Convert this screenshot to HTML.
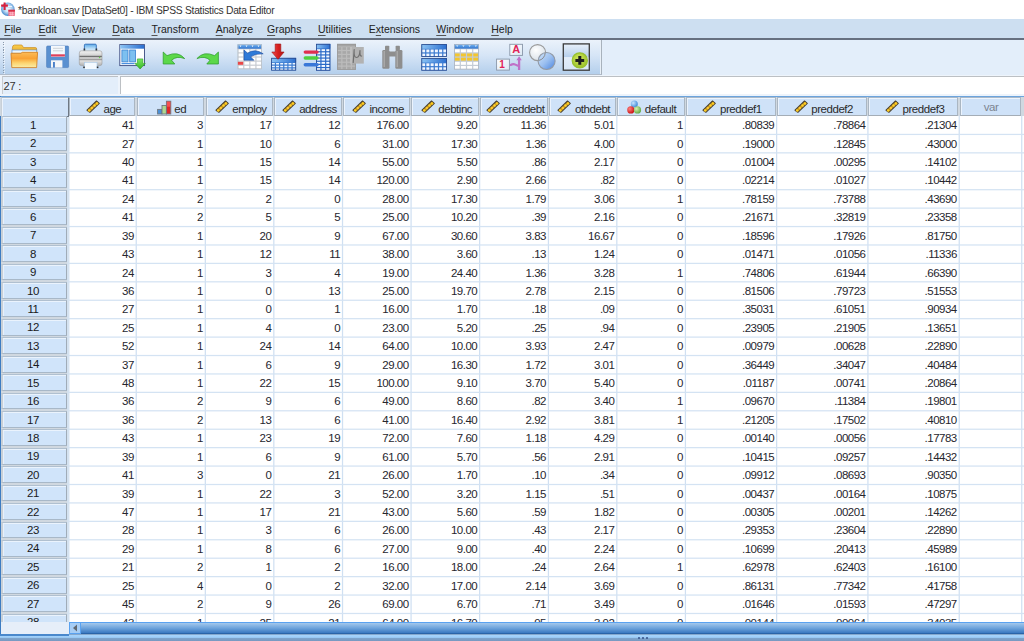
<!DOCTYPE html>
<html><head><meta charset="utf-8"><title>SPSS Data Editor</title>
<style>
*{margin:0;padding:0;box-sizing:border-box}
html,body{width:1024px;height:641px;overflow:hidden;background:#fff;font-family:"Liberation Sans",sans-serif;color:#222}
.a{position:absolute}
#title{left:0;top:0;width:1024px;height:19px;background:#fff}
#ttext{left:18px;top:3.6px;font-size:10.3px;letter-spacing:-0.275px;color:#333;white-space:nowrap;line-height:13px}
#menu{left:0;top:19px;width:1024px;height:19.2px;background:#cddff1}
.mi{top:22.5px;font-size:10.5px;line-height:13px;white-space:nowrap;color:#222}
.mi u{text-decoration:underline;text-decoration-thickness:1px;text-underline-offset:1.5px;text-decoration-color:#555}
#dark{left:0;top:38.1px;width:1024px;height:1.7px;background:#667080}
#tbarea{left:0;top:39.8px;width:1024px;height:35.9px;background:#e3eefa}
#tb{left:0;top:39.8px;width:602px;height:34.8px;background:linear-gradient(#ebf2fb,#d6e5f6 45%,#b4cfec);border-right:1.4px solid #a8b2bc;border-bottom:1px solid #b0bccb;box-shadow:inset -1px 0 0 #e8f0f8}
#tbline{display:none}
#cellrow{left:0;top:74.6px;width:1024px;height:21.2px;background:#eef4fb}
#cbox{left:2px;top:76px;width:116.1px;height:17.5px;background:#e3eefa;border-top:1.5px solid #bcc0c4;border-left:1px solid #c8ccd0}
#ctext{left:3.5px;top:80.2px;font-size:11px;letter-spacing:-0.2px;line-height:13px;color:#333}
#vbox{left:120.2px;top:76px;width:904px;height:17.5px;background:#fff;border-left:1.3px solid #bcc0c4;border-top:1.5px solid #bcc0c4}
#gtop{left:0;top:95.7px;width:1024px;height:1.8px;background:linear-gradient(#5a98d8,#7eb0e2)}
#gleft{left:0;top:96px;width:1.2px;height:539.5px;background:#3d7cc2}
#grid{left:1.3px;top:97.5px;width:1022.7px;height:524.1px;background:#fff;overflow:hidden}
.hd{top:97.4px;height:18.35px;background:#cfe2f8;border-top:1.1px solid #a9b9ca;border-left:0.9px solid #aab6c2;border-right:0.9px solid #aab6c2;border-bottom:1px solid #a4adb6;box-shadow:inset 0 1px 0 #eef5fd,inset 0.9px 0 0 #eef5fd}
#hstrip{left:0;top:97.4px;width:1024px;height:18.35px;background:#d0d8e0}
.ht{position:absolute;top:3.2px;height:15px;font-size:11.5px;letter-spacing:-0.45px;line-height:15px;white-space:nowrap;color:#2a2a2a;display:flex;justify-content:center;align-items:flex-start}
.ic{position:absolute}
.rh{left:1.1px;width:65.9px;height:16.8px;background:#d0e4fa;border-top:1.4px solid #b0c0d0;border-bottom:1px solid #a8b8c8;border-left:2px solid #c8d0d8;border-right:1px solid #a0acb8;box-shadow:inset 0 1px 0 #eaf3fd,inset 1px 0 0 #e8f0fa}
.rt{position:absolute;left:-1.6px;width:63px;text-align:center;top:1.5px;letter-spacing:-0.5px;font-size:11.5px;line-height:13px;color:#1a1a1a}
.vl{width:1.3px;background:#d2e1f1}
.hl{height:1.3px;background:#d6e4f3}
.c{font-size:11.5px;letter-spacing:-0.5px;line-height:13px;text-align:right;white-space:nowrap;color:#26262e}
#below{left:1.3px;top:621.6px;width:1022.7px;height:13.4px;background:#e6eef9}
#sb{left:68.5px;top:621.8px;width:955.5px;height:11.8px;background:linear-gradient(#a4c8ec,#6ea4dc 50%,#3a78c0);border-top:1px solid #5aa2f0;border-bottom:1px solid #2a64a8}
#sbl{left:68.5px;top:621.8px;width:12px;height:11.8px;background:#a6cdf5;border:1px solid #5aa2f0}
#bot1{left:0;top:633.6px;width:1024px;height:1.8px;background:#86a8cc}
#bot2{left:0;top:635.2px;width:1024px;height:5.8px;background:linear-gradient(#a8d4fb,#9ccdf8 40%,#7ea4cc 55%,#7898c0)}
</style></head><body>

<div id="title" class="a"></div>
<svg class="a" style="left:0;top:0" width="18" height="18" viewBox="0 0 18 18"><defs><radialGradient id="tic" cx="0.5" cy="0.45" r="0.55"><stop offset="0" stop-color="#dcecfa"/><stop offset="0.6" stop-color="#a8ccee"/><stop offset="1" stop-color="#3f86cc"/></radialGradient></defs><circle cx="7.85" cy="9.25" r="6.75" fill="url(#tic)"/><path d="M7 6.5H12M6 8.8H10.5M5.5 11H8" stroke="#f4faff" stroke-width="0.9"/><rect x="8.4" y="9.8" width="6.5" height="6.1" fill="#f07088"/><rect x="8.4" y="9.8" width="6.5" height="1.8" fill="#d83048"/><path d="M9.2 12.8H14.2M9.2 14.4H14.2M10.8 11.8V15.6M12.5 11.8V15.6" stroke="#ffc8d4" stroke-width="0.6"/><rect x="3.6" y="2.5" width="2" height="7.5" fill="#d8203c"/><rect x="1.1" y="4.5" width="6.8" height="2.2" fill="#d8203c"/></svg>
<div id="ttext" class="a">*bankloan.sav [DataSet0] - IBM SPSS Statistics Data Editor</div>
<div id="menu" class="a"></div>
<div class="a mi" style="left:4.3px"><u>F</u>ile</div>
<div class="a mi" style="left:38.6px"><u>E</u>dit</div>
<div class="a mi" style="left:72.3px"><u>V</u>iew</div>
<div class="a mi" style="left:112.2px"><u>D</u>ata</div>
<div class="a mi" style="left:151.5px"><u>T</u>ransform</div>
<div class="a mi" style="left:215.7px"><u>A</u>nalyze</div>
<div class="a mi" style="left:267px"><u>G</u>raphs</div>
<div class="a mi" style="left:318px"><u>U</u>tilities</div>
<div class="a mi" style="left:368.75px">E<u>x</u>tensions</div>
<div class="a mi" style="left:436.25px"><u>W</u>indow</div>
<div class="a mi" style="left:491.25px"><u>H</u>elp</div>
<div id="dark" class="a"></div>
<div id="tbarea" class="a"></div><div id="tb" class="a"></div>
<div class="a" style="left:3.4px;top:41.8px;width:1.1px;height:1.1px;background:#8a9aac;box-shadow:0.8px 0.8px 0 #ffffff"></div>
<div class="a" style="left:3.4px;top:44.35px;width:1.1px;height:1.1px;background:#8a9aac;box-shadow:0.8px 0.8px 0 #ffffff"></div>
<div class="a" style="left:3.4px;top:46.9px;width:1.1px;height:1.1px;background:#8a9aac;box-shadow:0.8px 0.8px 0 #ffffff"></div>
<div class="a" style="left:3.4px;top:49.45px;width:1.1px;height:1.1px;background:#8a9aac;box-shadow:0.8px 0.8px 0 #ffffff"></div>
<div class="a" style="left:3.4px;top:52px;width:1.1px;height:1.1px;background:#8a9aac;box-shadow:0.8px 0.8px 0 #ffffff"></div>
<div class="a" style="left:3.4px;top:54.55px;width:1.1px;height:1.1px;background:#8a9aac;box-shadow:0.8px 0.8px 0 #ffffff"></div>
<div class="a" style="left:3.4px;top:57.1px;width:1.1px;height:1.1px;background:#8a9aac;box-shadow:0.8px 0.8px 0 #ffffff"></div>
<div class="a" style="left:3.4px;top:59.65px;width:1.1px;height:1.1px;background:#8a9aac;box-shadow:0.8px 0.8px 0 #ffffff"></div>
<div class="a" style="left:3.4px;top:62.2px;width:1.1px;height:1.1px;background:#8a9aac;box-shadow:0.8px 0.8px 0 #ffffff"></div>
<div class="a" style="left:3.4px;top:64.75px;width:1.1px;height:1.1px;background:#8a9aac;box-shadow:0.8px 0.8px 0 #ffffff"></div>
<div class="a" style="left:3.4px;top:67.3px;width:1.1px;height:1.1px;background:#8a9aac;box-shadow:0.8px 0.8px 0 #ffffff"></div>
<div class="a" style="left:3.4px;top:69.85px;width:1.1px;height:1.1px;background:#8a9aac;box-shadow:0.8px 0.8px 0 #ffffff"></div>
<div class="a" style="left:3.4px;top:72.4px;width:1.1px;height:1.1px;background:#8a9aac;box-shadow:0.8px 0.8px 0 #ffffff"></div>
<svg class="a" style="left:0;top:0" width="610" height="80" viewBox="0 0 610 80">
<defs>
<linearGradient id="fold" x1="0" y1="0" x2="0" y2="1"><stop offset="0" stop-color="#fbbc58"/><stop offset="0.4" stop-color="#f9a234"/><stop offset="0.7" stop-color="#fcd470"/><stop offset="1" stop-color="#fbeea8"/></linearGradient>
<linearGradient id="foldb" x1="0" y1="0" x2="0" y2="1"><stop offset="0" stop-color="#f8d050"/><stop offset="1" stop-color="#e8a020"/></linearGradient>
<linearGradient id="hblue" x1="0" y1="0" x2="1" y2="0"><stop offset="0" stop-color="#8cc4f4"/><stop offset="1" stop-color="#2a6ed0"/></linearGradient>
<linearGradient id="hblue2" x1="0" y1="0" x2="0" y2="1"><stop offset="0" stop-color="#7ab8f0"/><stop offset="1" stop-color="#2f74d0"/></linearGradient>
<linearGradient id="pgray" x1="0" y1="0" x2="0" y2="1"><stop offset="0" stop-color="#f4f4f4"/><stop offset="0.3" stop-color="#d4d4d4"/><stop offset="0.38" stop-color="#6a6a6a"/><stop offset="0.48" stop-color="#e8e8e8"/><stop offset="0.58" stop-color="#9a9a9a"/><stop offset="0.68" stop-color="#e0e0e0"/><stop offset="1" stop-color="#b0b0b0"/></linearGradient>
<linearGradient id="paper" x1="0" y1="0" x2="0" y2="1"><stop offset="0" stop-color="#5aaae8"/><stop offset="0.5" stop-color="#b8dcf6"/><stop offset="1" stop-color="#f4faff"/></linearGradient>
<linearGradient id="green" x1="0" y1="0" x2="0" y2="1"><stop offset="0" stop-color="#7ae860"/><stop offset="1" stop-color="#38b828"/></linearGradient>
<linearGradient id="redar" x1="0" y1="0" x2="1" y2="0"><stop offset="0" stop-color="#f05050"/><stop offset="0.5" stop-color="#d82020"/><stop offset="1" stop-color="#b01818"/></linearGradient>
<linearGradient id="showbg" x1="0" y1="0" x2="0" y2="1"><stop offset="0" stop-color="#e8f0fa"/><stop offset="0.48" stop-color="#b8d0ec"/><stop offset="0.52" stop-color="#e4eefa"/><stop offset="1" stop-color="#d8e6f6"/></linearGradient>
<radialGradient id="circw" cx="0.4" cy="0.35" r="0.7"><stop offset="0" stop-color="#ffffff"/><stop offset="1" stop-color="#d8e0e8"/></radialGradient>
<linearGradient id="circb" x1="0" y1="0" x2="1" y2="1"><stop offset="0" stop-color="#d0e4fa"/><stop offset="0.5" stop-color="#9cc0f0"/><stop offset="1" stop-color="#4a84e0"/></linearGradient>
<radialGradient id="gball" cx="0.45" cy="0.4" r="0.6"><stop offset="0" stop-color="#d8ec60"/><stop offset="1" stop-color="#98c028"/></radialGradient>
</defs>

<path d="M12.4 48.2 Q12.4 45 14.5 45 L21.8 45 L23.6 47.6 L35.5 47.6 Q36.6 47.6 36.6 49 L36.6 53 L12.4 53 Z" fill="url(#foldb)" stroke="#c88a20" stroke-width="0.7"/>
<rect x="12" y="50" width="24.8" height="3.4" fill="#eaf6fc" stroke="#4a8ad8" stroke-width="0.6"/>
<path d="M11 53.2 L21 53.2 L22.2 52.3 L37.6 52.3 L36.6 67.6 L11.8 67.6 Z" fill="url(#fold)" stroke="#d07a18" stroke-width="0.8" stroke-linejoin="round"/>
<path d="M47.6 46 L67.6 46 Q68.6 46 68.6 47 L68.6 66.6 Q68.6 67.6 67.6 67.6 L47.6 67.6 Q46.6 67.6 46.6 66.6 L46.6 47 Q46.6 46 47.6 46 Z" fill="#5a90d0" stroke="#4a78b8" stroke-width="0.6"/>
<rect x="51" y="46" width="13.9" height="10.8" fill="#f4f8fc"/><rect x="51" y="54.3" width="13.9" height="2.2" fill="#e0405a"/>
<path d="M53 48.3H63M53 50.8H63" stroke="#b0b8c0" stroke-width="0.6"/>
<rect x="51" y="60.3" width="11.4" height="7.3" fill="#f4f6f8"/><rect x="53" y="62" width="1.9" height="5.6" fill="#4a80c8"/>
<rect x="84.4" y="44.2" width="11.9" height="8.5" rx="1" fill="url(#paper)" stroke="#2a6ab8" stroke-width="0.9"/><rect x="83.6" y="48.5" width="1.6" height="3.5" fill="#303840"/><rect x="95.6" y="48.5" width="1.6" height="3.5" fill="#303840"/>
<rect x="79.3" y="50.8" width="22.7" height="14.8" rx="2.2" fill="url(#pgray)" stroke="#9a9a9a" stroke-width="0.6"/>
<circle cx="99.6" cy="57.5" r="0.8" fill="#60d048"/>
<rect x="84.4" y="62.3" width="12.6" height="7" fill="#f4faff" stroke="#a8c8e8" stroke-width="0.6"/>
<rect x="83.2" y="66.5" width="1.6" height="1.6" fill="#303030"/><rect x="96.8" y="66.5" width="1.6" height="1.6" fill="#303030"/>
<rect x="119.8" y="44.6" width="24.7" height="21" fill="#fff" stroke="#3a4a80" stroke-width="0.9"/>
<rect x="120.2" y="45" width="24" height="3.7" fill="url(#hblue)"/>
<rect x="121.9" y="50" width="6.1" height="11.9" fill="#7cc0f0" stroke="#3a80d0" stroke-width="0.8"/>
<rect x="129.7" y="50" width="5.9" height="11.9" fill="#7cc0f0" stroke="#3a80d0" stroke-width="0.8"/>
<rect x="121.5" y="63" width="13" height="1.2" fill="#4a90e0"/>
<path d="M137.4 58.9 L142.8 58.9 L142.8 63.4 L145.3 63.4 L140.1 69 L134.9 63.4 L137.4 63.4 Z" fill="url(#green)" stroke="#289a20" stroke-width="0.6"/>
<path d="M163.2 52 L163.2 64 L174.8 64 L171.6 60.2 Q176.5 55.6 184.7 58.6 Q178 50.6 167 55.6 Z" fill="#5cd84a" stroke="#2a9a28" stroke-width="0.7" stroke-linejoin="round"/>
<path d="M163.2 52 L163.2 64 L174.8 64 L171.6 60.2 Q176.5 55.6 184.7 58.6 Q178 50.6 167 55.6 Z" fill="#5cd84a" stroke="#2a9a28" stroke-width="0.7" stroke-linejoin="round" transform="translate(381.6 0) scale(-1 1)"/>
<rect x="237.60" y="44.30" width="24.30" height="24.90" fill="#c8ccd2"/><rect x="237.60" y="44.30" width="24.30" height="4.40" fill="url(#hblue2)"/><rect x="238.30" y="49.40" width="4.87" height="2.90" fill="#fff"/><rect x="244.37" y="49.40" width="4.87" height="2.90" fill="#fff"/><rect x="250.45" y="49.40" width="4.87" height="2.90" fill="#fff"/><rect x="256.52" y="49.40" width="4.87" height="2.90" fill="#fff"/><rect x="238.30" y="53.50" width="4.87" height="2.90" fill="#fff"/><rect x="244.37" y="53.50" width="4.87" height="2.90" fill="#fff"/><rect x="250.45" y="53.50" width="4.87" height="2.90" fill="#fff"/><rect x="256.52" y="53.50" width="4.87" height="2.90" fill="#fff"/><rect x="238.30" y="57.60" width="4.87" height="2.90" fill="#fff"/><rect x="244.37" y="57.60" width="4.87" height="2.90" fill="#fff"/><rect x="250.45" y="57.60" width="4.87" height="2.90" fill="#fff"/><rect x="256.52" y="57.60" width="4.87" height="2.90" fill="#fff"/><rect x="238.30" y="61.70" width="4.87" height="2.90" fill="#fff"/><rect x="244.37" y="61.70" width="4.87" height="2.90" fill="#fff"/><rect x="250.45" y="61.70" width="4.87" height="2.90" fill="#fff"/><rect x="256.52" y="61.70" width="4.87" height="2.90" fill="#fff"/><rect x="238.30" y="65.80" width="4.87" height="2.90" fill="#fff"/><rect x="244.37" y="65.80" width="4.87" height="2.90" fill="#fff"/><rect x="250.45" y="65.80" width="4.87" height="2.90" fill="#fff"/><rect x="256.52" y="65.80" width="4.87" height="2.90" fill="#fff"/><rect x="238.00" y="44.70" width="23.50" height="24.10" fill="none" stroke="#b8c0c8" stroke-width="0.8"/>
<path d="M239.5 45.6 L241.5 45.6 L240.5 47 Z M245.5 45.6 L247.5 45.6 L246.5 47 Z M251.5 45.6 L253.5 45.6 L252.5 47 Z M257.5 45.6 L259.5 45.6 L258.5 47 Z" fill="#fff"/>
<rect x="237.9" y="61.8" width="5.3" height="3" fill="#e84848"/>
<path d="M244 50 L244 60.2 L253.9 60.2 L250.5 56.8 Q255.5 53.5 263.2 53.8 Q255 48 247.6 53.2 Z" fill="#2f7ad8" stroke="#1a4aa0" stroke-width="0.6" stroke-linejoin="round"/>
<rect x="271.20" y="57.90" width="24.90" height="12.60" fill="#3a7ad0"/><rect x="271.20" y="57.90" width="24.90" height="4.40" fill="url(#hblue)"/><rect x="271.90" y="63.00" width="2.95" height="1.53" fill="#eef6ff"/><rect x="276.05" y="63.00" width="2.95" height="1.53" fill="#eef6ff"/><rect x="280.20" y="63.00" width="2.95" height="1.53" fill="#eef6ff"/><rect x="284.35" y="63.00" width="2.95" height="1.53" fill="#eef6ff"/><rect x="288.50" y="63.00" width="2.95" height="1.53" fill="#eef6ff"/><rect x="292.65" y="63.00" width="2.95" height="1.53" fill="#eef6ff"/><rect x="271.90" y="65.73" width="2.95" height="1.53" fill="#eef6ff"/><rect x="276.05" y="65.73" width="2.95" height="1.53" fill="#eef6ff"/><rect x="280.20" y="65.73" width="2.95" height="1.53" fill="#eef6ff"/><rect x="284.35" y="65.73" width="2.95" height="1.53" fill="#eef6ff"/><rect x="288.50" y="65.73" width="2.95" height="1.53" fill="#eef6ff"/><rect x="292.65" y="65.73" width="2.95" height="1.53" fill="#eef6ff"/><rect x="271.90" y="68.47" width="2.95" height="1.53" fill="#eef6ff"/><rect x="276.05" y="68.47" width="2.95" height="1.53" fill="#eef6ff"/><rect x="280.20" y="68.47" width="2.95" height="1.53" fill="#eef6ff"/><rect x="284.35" y="68.47" width="2.95" height="1.53" fill="#eef6ff"/><rect x="288.50" y="68.47" width="2.95" height="1.53" fill="#eef6ff"/><rect x="292.65" y="68.47" width="2.95" height="1.53" fill="#eef6ff"/><rect x="271.60" y="58.30" width="24.10" height="11.80" fill="none" stroke="#2c4a8a" stroke-width="0.8"/>
<path d="M275.2 44 L280.8 44 L280.8 52 L284.1 52 L278 59.3 L271.8 52 L275.2 52 Z" fill="url(#redar)" stroke="#a01010" stroke-width="0.6" stroke-linejoin="round"/>
<rect x="316.10" y="43.90" width="14.20" height="26.70" fill="#2a6ac8"/><rect x="316.10" y="43.90" width="14.20" height="4.60" fill="url(#hblue)"/><rect x="316.80" y="49.20" width="3.53" height="1.96" fill="#f4f9ff"/><rect x="321.53" y="49.20" width="3.53" height="1.96" fill="#f4f9ff"/><rect x="326.27" y="49.20" width="3.53" height="1.96" fill="#f4f9ff"/><rect x="316.80" y="52.36" width="3.53" height="1.96" fill="#f4f9ff"/><rect x="321.53" y="52.36" width="3.53" height="1.96" fill="#f4f9ff"/><rect x="326.27" y="52.36" width="3.53" height="1.96" fill="#f4f9ff"/><rect x="316.80" y="55.51" width="3.53" height="1.96" fill="#f4f9ff"/><rect x="321.53" y="55.51" width="3.53" height="1.96" fill="#f4f9ff"/><rect x="326.27" y="55.51" width="3.53" height="1.96" fill="#f4f9ff"/><rect x="316.80" y="58.67" width="3.53" height="1.96" fill="#f4f9ff"/><rect x="321.53" y="58.67" width="3.53" height="1.96" fill="#f4f9ff"/><rect x="326.27" y="58.67" width="3.53" height="1.96" fill="#f4f9ff"/><rect x="316.80" y="61.83" width="3.53" height="1.96" fill="#f4f9ff"/><rect x="321.53" y="61.83" width="3.53" height="1.96" fill="#f4f9ff"/><rect x="326.27" y="61.83" width="3.53" height="1.96" fill="#f4f9ff"/><rect x="316.80" y="64.99" width="3.53" height="1.96" fill="#f4f9ff"/><rect x="321.53" y="64.99" width="3.53" height="1.96" fill="#f4f9ff"/><rect x="326.27" y="64.99" width="3.53" height="1.96" fill="#f4f9ff"/><rect x="316.80" y="68.14" width="3.53" height="1.96" fill="#f4f9ff"/><rect x="321.53" y="68.14" width="3.53" height="1.96" fill="#f4f9ff"/><rect x="326.27" y="68.14" width="3.53" height="1.96" fill="#f4f9ff"/><rect x="316.50" y="44.30" width="13.40" height="25.90" fill="none" stroke="#2a4a90" stroke-width="0.8"/>
<rect x="303.6" y="50.4" width="15.1" height="3.3" rx="1.6" fill="#e03050"/>
<rect x="303.6" y="56.2" width="15.1" height="3.5" rx="1.7" fill="#50d040"/>
<rect x="303.6" y="62.9" width="15.1" height="3.5" rx="1.7" fill="#3a78d8"/>
<rect x="337.00" y="43.90" width="19.00" height="26.00" fill="#bcbcbc"/><rect x="337.00" y="43.90" width="19.00" height="2.60" fill="#a4a4a4"/><rect x="337.70" y="47.20" width="3.55" height="2.70" fill="#a8a8a8"/><rect x="342.45" y="47.20" width="3.55" height="2.70" fill="#a8a8a8"/><rect x="347.20" y="47.20" width="3.55" height="2.70" fill="#a8a8a8"/><rect x="351.95" y="47.20" width="3.55" height="2.70" fill="#a8a8a8"/><rect x="337.70" y="51.10" width="3.55" height="2.70" fill="#a8a8a8"/><rect x="342.45" y="51.10" width="3.55" height="2.70" fill="#a8a8a8"/><rect x="347.20" y="51.10" width="3.55" height="2.70" fill="#a8a8a8"/><rect x="351.95" y="51.10" width="3.55" height="2.70" fill="#a8a8a8"/><rect x="337.70" y="55.00" width="3.55" height="2.70" fill="#a8a8a8"/><rect x="342.45" y="55.00" width="3.55" height="2.70" fill="#a8a8a8"/><rect x="347.20" y="55.00" width="3.55" height="2.70" fill="#a8a8a8"/><rect x="351.95" y="55.00" width="3.55" height="2.70" fill="#a8a8a8"/><rect x="337.70" y="58.90" width="3.55" height="2.70" fill="#a8a8a8"/><rect x="342.45" y="58.90" width="3.55" height="2.70" fill="#a8a8a8"/><rect x="347.20" y="58.90" width="3.55" height="2.70" fill="#a8a8a8"/><rect x="351.95" y="58.90" width="3.55" height="2.70" fill="#a8a8a8"/><rect x="337.70" y="62.80" width="3.55" height="2.70" fill="#a8a8a8"/><rect x="342.45" y="62.80" width="3.55" height="2.70" fill="#a8a8a8"/><rect x="347.20" y="62.80" width="3.55" height="2.70" fill="#a8a8a8"/><rect x="351.95" y="62.80" width="3.55" height="2.70" fill="#a8a8a8"/><rect x="337.70" y="66.70" width="3.55" height="2.70" fill="#a8a8a8"/><rect x="342.45" y="66.70" width="3.55" height="2.70" fill="#a8a8a8"/><rect x="347.20" y="66.70" width="3.55" height="2.70" fill="#a8a8a8"/><rect x="351.95" y="66.70" width="3.55" height="2.70" fill="#a8a8a8"/><rect x="337.40" y="44.30" width="18.20" height="25.20" fill="none" stroke="#989898" stroke-width="0.8"/>
<rect x="350.4" y="47" width="13.4" height="16.6" fill="#b2b2b2"/><rect x="350.4" y="47" width="1.2" height="16.6" fill="#c8c8c8"/>
<path d="M354.2 49.5 L353.2 62.5 M354.1 51 Q353.8 57.5 356.6 57.5 Q359.6 57.5 360 50.5 M360 50.5 Q359.6 56.5 361.6 56" fill="none" stroke="#707070" stroke-width="1.2" stroke-linecap="round"/>
<g fill="#8e8e8e"><rect x="385" y="45.8" width="4.3" height="4.5" rx="0.8"/><rect x="395.6" y="45.8" width="4.3" height="4.5" rx="0.8"/>
<rect x="382.3" y="50" width="7.2" height="18.7" rx="1.2"/><rect x="395.3" y="50" width="7.1" height="18.7" rx="1.2"/><rect x="389" y="51.5" width="6.8" height="5"/></g>
<rect x="383.5" y="51" width="1.5" height="16" fill="#a8a8a8"/><rect x="396.5" y="51" width="1.5" height="16" fill="#a8a8a8"/>
<rect x="421.40" y="44.20" width="25.50" height="12.70" fill="#3a7ad0"/><rect x="421.40" y="44.20" width="25.50" height="4.60" fill="url(#hblue)"/><rect x="422.10" y="49.50" width="3.05" height="2.85" fill="#f0f6ff"/><rect x="426.35" y="49.50" width="3.05" height="2.85" fill="#f0f6ff"/><rect x="430.60" y="49.50" width="3.05" height="2.85" fill="#f0f6ff"/><rect x="434.85" y="49.50" width="3.05" height="2.85" fill="#f0f6ff"/><rect x="439.10" y="49.50" width="3.05" height="2.85" fill="#f0f6ff"/><rect x="443.35" y="49.50" width="3.05" height="2.85" fill="#f0f6ff"/><rect x="422.10" y="53.55" width="3.05" height="2.85" fill="#f0f6ff"/><rect x="426.35" y="53.55" width="3.05" height="2.85" fill="#f0f6ff"/><rect x="430.60" y="53.55" width="3.05" height="2.85" fill="#f0f6ff"/><rect x="434.85" y="53.55" width="3.05" height="2.85" fill="#f0f6ff"/><rect x="439.10" y="53.55" width="3.05" height="2.85" fill="#f0f6ff"/><rect x="443.35" y="53.55" width="3.05" height="2.85" fill="#f0f6ff"/><rect x="421.80" y="44.60" width="24.70" height="11.90" fill="none" stroke="#2c4a8a" stroke-width="0.8"/>
<rect x="421.40" y="58.00" width="25.50" height="12.60" fill="#3a7ad0"/><rect x="421.40" y="58.00" width="25.50" height="4.60" fill="url(#hblue)"/><rect x="422.10" y="63.30" width="3.05" height="2.80" fill="#f0f6ff"/><rect x="426.35" y="63.30" width="3.05" height="2.80" fill="#f0f6ff"/><rect x="430.60" y="63.30" width="3.05" height="2.80" fill="#f0f6ff"/><rect x="434.85" y="63.30" width="3.05" height="2.80" fill="#f0f6ff"/><rect x="439.10" y="63.30" width="3.05" height="2.80" fill="#f0f6ff"/><rect x="443.35" y="63.30" width="3.05" height="2.80" fill="#f0f6ff"/><rect x="422.10" y="67.30" width="3.05" height="2.80" fill="#f0f6ff"/><rect x="426.35" y="67.30" width="3.05" height="2.80" fill="#f0f6ff"/><rect x="430.60" y="67.30" width="3.05" height="2.80" fill="#f0f6ff"/><rect x="434.85" y="67.30" width="3.05" height="2.80" fill="#f0f6ff"/><rect x="439.10" y="67.30" width="3.05" height="2.80" fill="#f0f6ff"/><rect x="443.35" y="67.30" width="3.05" height="2.80" fill="#f0f6ff"/><rect x="421.80" y="58.40" width="24.70" height="11.80" fill="none" stroke="#2c4a8a" stroke-width="0.8"/>
<rect x="454.00" y="44.20" width="24.80" height="25.30" fill="#c4ccd6"/><rect x="454.00" y="44.20" width="24.80" height="4.40" fill="url(#hblue2)"/><rect x="454.70" y="49.30" width="5.00" height="2.98" fill="#fff"/><rect x="460.90" y="49.30" width="5.00" height="2.98" fill="#fff"/><rect x="467.10" y="49.30" width="5.00" height="2.98" fill="#fff"/><rect x="473.30" y="49.30" width="5.00" height="2.98" fill="#fff"/><rect x="454.70" y="53.48" width="5.00" height="2.98" fill="#f3c62e"/><rect x="460.90" y="53.48" width="5.00" height="2.98" fill="#f3c62e"/><rect x="467.10" y="53.48" width="5.00" height="2.98" fill="#f3c62e"/><rect x="473.30" y="53.48" width="5.00" height="2.98" fill="#f3c62e"/><rect x="454.70" y="57.66" width="5.00" height="2.98" fill="#f3c62e"/><rect x="460.90" y="57.66" width="5.00" height="2.98" fill="#f3c62e"/><rect x="467.10" y="57.66" width="5.00" height="2.98" fill="#f3c62e"/><rect x="473.30" y="57.66" width="5.00" height="2.98" fill="#f3c62e"/><rect x="454.70" y="61.84" width="5.00" height="2.98" fill="#fff"/><rect x="460.90" y="61.84" width="5.00" height="2.98" fill="#fff"/><rect x="467.10" y="61.84" width="5.00" height="2.98" fill="#fff"/><rect x="473.30" y="61.84" width="5.00" height="2.98" fill="#fff"/><rect x="454.70" y="66.02" width="5.00" height="2.98" fill="#fff"/><rect x="460.90" y="66.02" width="5.00" height="2.98" fill="#fff"/><rect x="467.10" y="66.02" width="5.00" height="2.98" fill="#fff"/><rect x="473.30" y="66.02" width="5.00" height="2.98" fill="#fff"/><rect x="454.40" y="44.60" width="24.00" height="24.50" fill="none" stroke="#aab4c4" stroke-width="0.8"/>
<path d="M456 45.4 L458.4 45.4 L457.2 46.8 Z M462.2 45.4 L464.6 45.4 L463.4 46.8 Z M468.4 45.4 L470.8 45.4 L469.6 46.8 Z M474.6 45.4 L477 45.4 L475.8 46.8 Z" fill="#fff"/>
<defs><linearGradient id="vlb" x1="0" y1="0" x2="1" y2="1"><stop offset="0" stop-color="#ffffff"/><stop offset="1" stop-color="#dce8f4"/></linearGradient></defs>
<rect x="509.8" y="44.3" width="12.7" height="11.1" fill="url(#vlb)" stroke="#8896a8" stroke-width="0.9"/>
<text x="512.2" y="53.1" font-family="Liberation Sans" font-weight="bold" font-size="10.4" fill="#e02458" transform="translate(512.2 0) scale(1.05 1) translate(-512.2 0)">A</text>
<rect x="496.6" y="59.1" width="12.8" height="11" fill="url(#vlb)" stroke="#8896a8" stroke-width="0.9"/>
<text x="499.2" y="67.8" font-family="Liberation Sans" font-weight="bold" font-size="10" fill="#e02458">1</text>
<path d="M519.1 70 L519.1 58.8" stroke="#c070c8" stroke-width="2.3" fill="none"/>
<path d="M516.4 60.2 L519.1 56.3 L521.8 60.2 Z" fill="#c070c8"/>
<path d="M510.7 65 Q513.2 63.5 515.4 64.6 Q517.4 65.6 519 66" stroke="#c070c8" stroke-width="2.1" fill="none" stroke-linecap="round"/>
<circle cx="537.6" cy="52.6" r="8" fill="url(#circw)" stroke="#9a9a9a" stroke-width="1.1"/>
<circle cx="546.6" cy="61" r="8.5" fill="url(#circb)" stroke="#929aa6" stroke-width="1.1"/>
<path d="M538.6 60.5 A8 8 0 0 0 545.2 52.7" fill="none" stroke="#8a8a8a" stroke-width="1"/>
<rect x="563.3" y="43.9" width="26" height="26.3" fill="url(#showbg)" stroke="#3a3a3a" stroke-width="1.3"/>
<circle cx="579.8" cy="60.4" r="7.6" fill="url(#gball)" stroke="#98c030" stroke-width="1.2"/>
<path d="M579.8 56V64.8M575.4 60.4H584.2" stroke="#1e1e1e" stroke-width="3"/>
</svg>
<div id="tbline" class="a"></div><div id="cellrow" class="a"></div>
<div id="cbox" class="a"></div><div id="ctext" class="a">27 :</div><div id="vbox" class="a"></div>
<div id="gtop" class="a"></div><div id="gleft" class="a"></div>
<div id="grid" class="a"></div>
<svg class="a" style="left:0;top:0" width="1024" height="622" viewBox="0 0 1024 622"><rect x="68.2" y="116" width="1.25" height="506" fill="#d0e0f2"/><rect x="135.6" y="116" width="1.25" height="506" fill="#d0e0f2"/><rect x="204.7" y="116" width="1.25" height="506" fill="#d0e0f2"/><rect x="273.2" y="116" width="1.25" height="506" fill="#d0e0f2"/><rect x="341.9" y="116" width="1.25" height="506" fill="#d0e0f2"/><rect x="410.45" y="116" width="1.25" height="506" fill="#d0e0f2"/><rect x="479" y="116" width="1.25" height="506" fill="#d0e0f2"/><rect x="547.8" y="116" width="1.25" height="506" fill="#d0e0f2"/><rect x="616.2" y="116" width="1.25" height="506" fill="#d0e0f2"/><rect x="684.8" y="116" width="1.25" height="506" fill="#d0e0f2"/><rect x="776" y="116" width="1.25" height="506" fill="#d0e0f2"/><rect x="867.3" y="116" width="1.25" height="506" fill="#d0e0f2"/><rect x="958.6" y="116" width="1.25" height="506" fill="#d0e0f2"/><rect x="1021.1" y="116" width="1.25" height="506" fill="#d0e0f2"/><rect x="68.8" y="133.8" width="955.2" height="1.25" fill="#d4e3f3"/><rect x="68.8" y="152.23" width="955.2" height="1.25" fill="#d4e3f3"/><rect x="68.8" y="170.65" width="955.2" height="1.25" fill="#d4e3f3"/><rect x="68.8" y="189.08" width="955.2" height="1.25" fill="#d4e3f3"/><rect x="68.8" y="207.5" width="955.2" height="1.25" fill="#d4e3f3"/><rect x="68.8" y="225.93" width="955.2" height="1.25" fill="#d4e3f3"/><rect x="68.8" y="244.35" width="955.2" height="1.25" fill="#d4e3f3"/><rect x="68.8" y="262.77" width="955.2" height="1.25" fill="#d4e3f3"/><rect x="68.8" y="281.2" width="955.2" height="1.25" fill="#d4e3f3"/><rect x="68.8" y="299.62" width="955.2" height="1.25" fill="#d4e3f3"/><rect x="68.8" y="318.05" width="955.2" height="1.25" fill="#d4e3f3"/><rect x="68.8" y="336.48" width="955.2" height="1.25" fill="#d4e3f3"/><rect x="68.8" y="354.9" width="955.2" height="1.25" fill="#d4e3f3"/><rect x="68.8" y="373.32" width="955.2" height="1.25" fill="#d4e3f3"/><rect x="68.8" y="391.75" width="955.2" height="1.25" fill="#d4e3f3"/><rect x="68.8" y="410.17" width="955.2" height="1.25" fill="#d4e3f3"/><rect x="68.8" y="428.6" width="955.2" height="1.25" fill="#d4e3f3"/><rect x="68.8" y="447.02" width="955.2" height="1.25" fill="#d4e3f3"/><rect x="68.8" y="465.45" width="955.2" height="1.25" fill="#d4e3f3"/><rect x="68.8" y="483.88" width="955.2" height="1.25" fill="#d4e3f3"/><rect x="68.8" y="502.3" width="955.2" height="1.25" fill="#d4e3f3"/><rect x="68.8" y="520.73" width="955.2" height="1.25" fill="#d4e3f3"/><rect x="68.8" y="539.15" width="955.2" height="1.25" fill="#d4e3f3"/><rect x="68.8" y="557.58" width="955.2" height="1.25" fill="#d4e3f3"/><rect x="68.8" y="576" width="955.2" height="1.25" fill="#d4e3f3"/><rect x="68.8" y="594.42" width="955.2" height="1.25" fill="#d4e3f3"/><rect x="68.8" y="612.85" width="955.2" height="1.25" fill="#d4e3f3"/></svg>
<div class="a" style="left:1.1px;top:117px;width:66px;height:504.6px;background:#d0d8e0"></div><div class="a" style="left:67px;top:117px;width:2px;height:504.6px;background:#d4e2f0"></div>
<div id="hstrip" class="a"></div><div class="a hd" style="left:1.1px;width:68px;height:19.35px;border-left:1.2px solid #c8d0d8;border-right:1.8px solid #6e7884;border-bottom:1.3px solid #6e7884"></div>
<div class="a hd" style="left:69.2px;width:66.2px">
<div class="ht" style="left:0;width:65.9px"><span style="display:block;width:18.5px;height:15px;position:relative"><svg class="ic" style="left:0;top:-1.2px" width="16" height="15" viewBox="0 0 16 15"><path d="M2.0 10.2 L4.9 12.3 L14.3 3.3 L11.5 1.0 Z" fill="#c89818" stroke="#4c4434" stroke-width="1.1" stroke-linejoin="round"/><circle cx="4.2" cy="10.5" r="1.25" fill="#ffd02a"/><circle cx="6.8" cy="8.1" r="1.25" fill="#ffc830"/><circle cx="9.5" cy="5.6" r="1.25" fill="#ffd02a"/><circle cx="12" cy="3.4" r="1.25" fill="#ffcc20"/></svg></span><span>age</span></div>
</div>
<div class="a hd" style="left:136.6px;width:67.9px">
<div class="ht" style="left:0;width:67.6px"><span style="display:block;width:17.5px;height:15px;position:relative"><svg class="ic" style="left:0;top:-1.2px" width="15" height="15" viewBox="0 0 15 15"><rect x="0.6" y="9.4" width="4.4" height="4.6" fill="#4a90d8" stroke="#707880" stroke-width="0.9"/><rect x="5" y="5.5" width="4.4" height="8.5" fill="#b0d890" stroke="#707880" stroke-width="0.9"/><rect x="9.4" y="1.2" width="4.4" height="12.8" fill="#e02828" stroke="#707880" stroke-width="0.9"/><rect x="9.9" y="1.7" width="3.4" height="5" fill="#f85050"/></svg></span><span>ed</span></div>
</div>
<div class="a hd" style="left:205.7px;width:67.3px">
<div class="ht" style="left:0;width:67px"><span style="display:block;width:18.5px;height:15px;position:relative"><svg class="ic" style="left:0;top:-1.2px" width="16" height="15" viewBox="0 0 16 15"><path d="M2.0 10.2 L4.9 12.3 L14.3 3.3 L11.5 1.0 Z" fill="#c89818" stroke="#4c4434" stroke-width="1.1" stroke-linejoin="round"/><circle cx="4.2" cy="10.5" r="1.25" fill="#ffd02a"/><circle cx="6.8" cy="8.1" r="1.25" fill="#ffc830"/><circle cx="9.5" cy="5.6" r="1.25" fill="#ffd02a"/><circle cx="12" cy="3.4" r="1.25" fill="#ffcc20"/></svg></span><span>employ</span></div>
</div>
<div class="a hd" style="left:274.2px;width:67.5px">
<div class="ht" style="left:0;width:67.2px"><span style="display:block;width:18.5px;height:15px;position:relative"><svg class="ic" style="left:0;top:-1.2px" width="16" height="15" viewBox="0 0 16 15"><path d="M2.0 10.2 L4.9 12.3 L14.3 3.3 L11.5 1.0 Z" fill="#c89818" stroke="#4c4434" stroke-width="1.1" stroke-linejoin="round"/><circle cx="4.2" cy="10.5" r="1.25" fill="#ffd02a"/><circle cx="6.8" cy="8.1" r="1.25" fill="#ffc830"/><circle cx="9.5" cy="5.6" r="1.25" fill="#ffd02a"/><circle cx="12" cy="3.4" r="1.25" fill="#ffcc20"/></svg></span><span>address</span></div>
</div>
<div class="a hd" style="left:342.9px;width:67.35px">
<div class="ht" style="left:0;width:67.05px"><span style="display:block;width:18.5px;height:15px;position:relative"><svg class="ic" style="left:0;top:-1.2px" width="16" height="15" viewBox="0 0 16 15"><path d="M2.0 10.2 L4.9 12.3 L14.3 3.3 L11.5 1.0 Z" fill="#c89818" stroke="#4c4434" stroke-width="1.1" stroke-linejoin="round"/><circle cx="4.2" cy="10.5" r="1.25" fill="#ffd02a"/><circle cx="6.8" cy="8.1" r="1.25" fill="#ffc830"/><circle cx="9.5" cy="5.6" r="1.25" fill="#ffd02a"/><circle cx="12" cy="3.4" r="1.25" fill="#ffcc20"/></svg></span><span>income</span></div>
</div>
<div class="a hd" style="left:411.45px;width:67.35px">
<div class="ht" style="left:0;width:67.05px"><span style="display:block;width:18.5px;height:15px;position:relative"><svg class="ic" style="left:0;top:-1.2px" width="16" height="15" viewBox="0 0 16 15"><path d="M2.0 10.2 L4.9 12.3 L14.3 3.3 L11.5 1.0 Z" fill="#c89818" stroke="#4c4434" stroke-width="1.1" stroke-linejoin="round"/><circle cx="4.2" cy="10.5" r="1.25" fill="#ffd02a"/><circle cx="6.8" cy="8.1" r="1.25" fill="#ffc830"/><circle cx="9.5" cy="5.6" r="1.25" fill="#ffd02a"/><circle cx="12" cy="3.4" r="1.25" fill="#ffcc20"/></svg></span><span>debtinc</span></div>
</div>
<div class="a hd" style="left:480px;width:67.6px">
<div class="ht" style="left:0;width:67.3px"><span style="display:block;width:18.5px;height:15px;position:relative"><svg class="ic" style="left:0;top:-1.2px" width="16" height="15" viewBox="0 0 16 15"><path d="M2.0 10.2 L4.9 12.3 L14.3 3.3 L11.5 1.0 Z" fill="#c89818" stroke="#4c4434" stroke-width="1.1" stroke-linejoin="round"/><circle cx="4.2" cy="10.5" r="1.25" fill="#ffd02a"/><circle cx="6.8" cy="8.1" r="1.25" fill="#ffc830"/><circle cx="9.5" cy="5.6" r="1.25" fill="#ffd02a"/><circle cx="12" cy="3.4" r="1.25" fill="#ffcc20"/></svg></span><span>creddebt</span></div>
</div>
<div class="a hd" style="left:548.8px;width:67.2px">
<div class="ht" style="left:0;width:66.9px"><span style="display:block;width:18.5px;height:15px;position:relative"><svg class="ic" style="left:0;top:-1.2px" width="16" height="15" viewBox="0 0 16 15"><path d="M2.0 10.2 L4.9 12.3 L14.3 3.3 L11.5 1.0 Z" fill="#c89818" stroke="#4c4434" stroke-width="1.1" stroke-linejoin="round"/><circle cx="4.2" cy="10.5" r="1.25" fill="#ffd02a"/><circle cx="6.8" cy="8.1" r="1.25" fill="#ffc830"/><circle cx="9.5" cy="5.6" r="1.25" fill="#ffd02a"/><circle cx="12" cy="3.4" r="1.25" fill="#ffcc20"/></svg></span><span>othdebt</span></div>
</div>
<div class="a hd" style="left:617.2px;width:67.4px">
<div class="ht" style="left:0;width:67.1px"><span style="display:block;width:17.5px;height:15px;position:relative"><svg class="ic" style="left:0;top:-1.2px" width="15" height="14" viewBox="0 0 15 14"><defs><radialGradient id="gb" cx="0.35" cy="0.35" r="0.7"><stop offset="0" stop-color="#c8e4ff"/><stop offset="1" stop-color="#3a88d8"/></radialGradient><radialGradient id="gr" cx="0.35" cy="0.35" r="0.7"><stop offset="0" stop-color="#ff8080"/><stop offset="1" stop-color="#c81010"/></radialGradient><radialGradient id="gg" cx="0.35" cy="0.35" r="0.7"><stop offset="0" stop-color="#d8f0b0"/><stop offset="1" stop-color="#60a840"/></radialGradient></defs><circle cx="7.3" cy="4" r="3.5" fill="url(#gb)"/><circle cx="3.8" cy="9.9" r="3.6" fill="url(#gr)"/><circle cx="10.5" cy="9.9" r="3.6" fill="url(#gg)"/></svg></span><span>default</span></div>
</div>
<div class="a hd" style="left:685.8px;width:90px">
<div class="ht" style="left:0;width:89.7px"><span style="display:block;width:18.5px;height:15px;position:relative"><svg class="ic" style="left:0;top:-1.2px" width="16" height="15" viewBox="0 0 16 15"><path d="M2.0 10.2 L4.9 12.3 L14.3 3.3 L11.5 1.0 Z" fill="#c89818" stroke="#4c4434" stroke-width="1.1" stroke-linejoin="round"/><circle cx="4.2" cy="10.5" r="1.25" fill="#ffd02a"/><circle cx="6.8" cy="8.1" r="1.25" fill="#ffc830"/><circle cx="9.5" cy="5.6" r="1.25" fill="#ffd02a"/><circle cx="12" cy="3.4" r="1.25" fill="#ffcc20"/></svg></span><span>preddef1</span></div>
</div>
<div class="a hd" style="left:777px;width:90.1px">
<div class="ht" style="left:0;width:89.8px"><span style="display:block;width:18.5px;height:15px;position:relative"><svg class="ic" style="left:0;top:-1.2px" width="16" height="15" viewBox="0 0 16 15"><path d="M2.0 10.2 L4.9 12.3 L14.3 3.3 L11.5 1.0 Z" fill="#c89818" stroke="#4c4434" stroke-width="1.1" stroke-linejoin="round"/><circle cx="4.2" cy="10.5" r="1.25" fill="#ffd02a"/><circle cx="6.8" cy="8.1" r="1.25" fill="#ffc830"/><circle cx="9.5" cy="5.6" r="1.25" fill="#ffd02a"/><circle cx="12" cy="3.4" r="1.25" fill="#ffcc20"/></svg></span><span>preddef2</span></div>
</div>
<div class="a hd" style="left:868.3px;width:90.1px">
<div class="ht" style="left:0;width:89.8px"><span style="display:block;width:18.5px;height:15px;position:relative"><svg class="ic" style="left:0;top:-1.2px" width="16" height="15" viewBox="0 0 16 15"><path d="M2.0 10.2 L4.9 12.3 L14.3 3.3 L11.5 1.0 Z" fill="#c89818" stroke="#4c4434" stroke-width="1.1" stroke-linejoin="round"/><circle cx="4.2" cy="10.5" r="1.25" fill="#ffd02a"/><circle cx="6.8" cy="8.1" r="1.25" fill="#ffc830"/><circle cx="9.5" cy="5.6" r="1.25" fill="#ffd02a"/><circle cx="12" cy="3.4" r="1.25" fill="#ffcc20"/></svg></span><span>preddef3</span></div>
</div>
<div class="a hd" style="left:959.6px;width:61.3px">
<div class="ht" style="left:0;top:2px;width:61px;color:#7c8490">var</div>
</div>
<div class="a rh" style="top:116.2px"><div class="rt">1</div></div>
<div class="a c" style="left:68.8px;width:65px;top:119.1px">41</div>
<div class="a c" style="left:136.2px;width:66.7px;top:119.1px">3</div>
<div class="a c" style="left:205.3px;width:66.1px;top:119.1px">17</div>
<div class="a c" style="left:273.8px;width:66.3px;top:119.1px">12</div>
<div class="a c" style="left:342.5px;width:66.15px;top:119.1px">176.00</div>
<div class="a c" style="left:411.05px;width:66.15px;top:119.1px">9.20</div>
<div class="a c" style="left:479.6px;width:66.4px;top:119.1px">11.36</div>
<div class="a c" style="left:548.4px;width:66px;top:119.1px">5.01</div>
<div class="a c" style="left:616.8px;width:66.2px;top:119.1px">1</div>
<div class="a c" style="left:685.4px;width:88.8px;top:119.1px">.80839</div>
<div class="a c" style="left:776.6px;width:88.9px;top:119.1px">.78864</div>
<div class="a c" style="left:867.9px;width:88.9px;top:119.1px">.21304</div>
<div class="a rh" style="top:134.62px"><div class="rt">2</div></div>
<div class="a c" style="left:68.8px;width:65px;top:137.53px">27</div>
<div class="a c" style="left:136.2px;width:66.7px;top:137.53px">1</div>
<div class="a c" style="left:205.3px;width:66.1px;top:137.53px">10</div>
<div class="a c" style="left:273.8px;width:66.3px;top:137.53px">6</div>
<div class="a c" style="left:342.5px;width:66.15px;top:137.53px">31.00</div>
<div class="a c" style="left:411.05px;width:66.15px;top:137.53px">17.30</div>
<div class="a c" style="left:479.6px;width:66.4px;top:137.53px">1.36</div>
<div class="a c" style="left:548.4px;width:66px;top:137.53px">4.00</div>
<div class="a c" style="left:616.8px;width:66.2px;top:137.53px">0</div>
<div class="a c" style="left:685.4px;width:88.8px;top:137.53px">.19000</div>
<div class="a c" style="left:776.6px;width:88.9px;top:137.53px">.12845</div>
<div class="a c" style="left:867.9px;width:88.9px;top:137.53px">.43000</div>
<div class="a rh" style="top:153.05px"><div class="rt">3</div></div>
<div class="a c" style="left:68.8px;width:65px;top:155.95px">40</div>
<div class="a c" style="left:136.2px;width:66.7px;top:155.95px">1</div>
<div class="a c" style="left:205.3px;width:66.1px;top:155.95px">15</div>
<div class="a c" style="left:273.8px;width:66.3px;top:155.95px">14</div>
<div class="a c" style="left:342.5px;width:66.15px;top:155.95px">55.00</div>
<div class="a c" style="left:411.05px;width:66.15px;top:155.95px">5.50</div>
<div class="a c" style="left:479.6px;width:66.4px;top:155.95px">.86</div>
<div class="a c" style="left:548.4px;width:66px;top:155.95px">2.17</div>
<div class="a c" style="left:616.8px;width:66.2px;top:155.95px">0</div>
<div class="a c" style="left:685.4px;width:88.8px;top:155.95px">.01004</div>
<div class="a c" style="left:776.6px;width:88.9px;top:155.95px">.00295</div>
<div class="a c" style="left:867.9px;width:88.9px;top:155.95px">.14102</div>
<div class="a rh" style="top:171.47px"><div class="rt">4</div></div>
<div class="a c" style="left:68.8px;width:65px;top:174.38px">41</div>
<div class="a c" style="left:136.2px;width:66.7px;top:174.38px">1</div>
<div class="a c" style="left:205.3px;width:66.1px;top:174.38px">15</div>
<div class="a c" style="left:273.8px;width:66.3px;top:174.38px">14</div>
<div class="a c" style="left:342.5px;width:66.15px;top:174.38px">120.00</div>
<div class="a c" style="left:411.05px;width:66.15px;top:174.38px">2.90</div>
<div class="a c" style="left:479.6px;width:66.4px;top:174.38px">2.66</div>
<div class="a c" style="left:548.4px;width:66px;top:174.38px">.82</div>
<div class="a c" style="left:616.8px;width:66.2px;top:174.38px">0</div>
<div class="a c" style="left:685.4px;width:88.8px;top:174.38px">.02214</div>
<div class="a c" style="left:776.6px;width:88.9px;top:174.38px">.01027</div>
<div class="a c" style="left:867.9px;width:88.9px;top:174.38px">.10442</div>
<div class="a rh" style="top:189.9px"><div class="rt">5</div></div>
<div class="a c" style="left:68.8px;width:65px;top:192.8px">24</div>
<div class="a c" style="left:136.2px;width:66.7px;top:192.8px">2</div>
<div class="a c" style="left:205.3px;width:66.1px;top:192.8px">2</div>
<div class="a c" style="left:273.8px;width:66.3px;top:192.8px">0</div>
<div class="a c" style="left:342.5px;width:66.15px;top:192.8px">28.00</div>
<div class="a c" style="left:411.05px;width:66.15px;top:192.8px">17.30</div>
<div class="a c" style="left:479.6px;width:66.4px;top:192.8px">1.79</div>
<div class="a c" style="left:548.4px;width:66px;top:192.8px">3.06</div>
<div class="a c" style="left:616.8px;width:66.2px;top:192.8px">1</div>
<div class="a c" style="left:685.4px;width:88.8px;top:192.8px">.78159</div>
<div class="a c" style="left:776.6px;width:88.9px;top:192.8px">.73788</div>
<div class="a c" style="left:867.9px;width:88.9px;top:192.8px">.43690</div>
<div class="a rh" style="top:208.33px"><div class="rt">6</div></div>
<div class="a c" style="left:68.8px;width:65px;top:211.23px">41</div>
<div class="a c" style="left:136.2px;width:66.7px;top:211.23px">2</div>
<div class="a c" style="left:205.3px;width:66.1px;top:211.23px">5</div>
<div class="a c" style="left:273.8px;width:66.3px;top:211.23px">5</div>
<div class="a c" style="left:342.5px;width:66.15px;top:211.23px">25.00</div>
<div class="a c" style="left:411.05px;width:66.15px;top:211.23px">10.20</div>
<div class="a c" style="left:479.6px;width:66.4px;top:211.23px">.39</div>
<div class="a c" style="left:548.4px;width:66px;top:211.23px">2.16</div>
<div class="a c" style="left:616.8px;width:66.2px;top:211.23px">0</div>
<div class="a c" style="left:685.4px;width:88.8px;top:211.23px">.21671</div>
<div class="a c" style="left:776.6px;width:88.9px;top:211.23px">.32819</div>
<div class="a c" style="left:867.9px;width:88.9px;top:211.23px">.23358</div>
<div class="a rh" style="top:226.75px"><div class="rt">7</div></div>
<div class="a c" style="left:68.8px;width:65px;top:229.65px">39</div>
<div class="a c" style="left:136.2px;width:66.7px;top:229.65px">1</div>
<div class="a c" style="left:205.3px;width:66.1px;top:229.65px">20</div>
<div class="a c" style="left:273.8px;width:66.3px;top:229.65px">9</div>
<div class="a c" style="left:342.5px;width:66.15px;top:229.65px">67.00</div>
<div class="a c" style="left:411.05px;width:66.15px;top:229.65px">30.60</div>
<div class="a c" style="left:479.6px;width:66.4px;top:229.65px">3.83</div>
<div class="a c" style="left:548.4px;width:66px;top:229.65px">16.67</div>
<div class="a c" style="left:616.8px;width:66.2px;top:229.65px">0</div>
<div class="a c" style="left:685.4px;width:88.8px;top:229.65px">.18596</div>
<div class="a c" style="left:776.6px;width:88.9px;top:229.65px">.17926</div>
<div class="a c" style="left:867.9px;width:88.9px;top:229.65px">.81750</div>
<div class="a rh" style="top:245.17px"><div class="rt">8</div></div>
<div class="a c" style="left:68.8px;width:65px;top:248.07px">43</div>
<div class="a c" style="left:136.2px;width:66.7px;top:248.07px">1</div>
<div class="a c" style="left:205.3px;width:66.1px;top:248.07px">12</div>
<div class="a c" style="left:273.8px;width:66.3px;top:248.07px">11</div>
<div class="a c" style="left:342.5px;width:66.15px;top:248.07px">38.00</div>
<div class="a c" style="left:411.05px;width:66.15px;top:248.07px">3.60</div>
<div class="a c" style="left:479.6px;width:66.4px;top:248.07px">.13</div>
<div class="a c" style="left:548.4px;width:66px;top:248.07px">1.24</div>
<div class="a c" style="left:616.8px;width:66.2px;top:248.07px">0</div>
<div class="a c" style="left:685.4px;width:88.8px;top:248.07px">.01471</div>
<div class="a c" style="left:776.6px;width:88.9px;top:248.07px">.01056</div>
<div class="a c" style="left:867.9px;width:88.9px;top:248.07px">.11336</div>
<div class="a rh" style="top:263.6px"><div class="rt">9</div></div>
<div class="a c" style="left:68.8px;width:65px;top:266.5px">24</div>
<div class="a c" style="left:136.2px;width:66.7px;top:266.5px">1</div>
<div class="a c" style="left:205.3px;width:66.1px;top:266.5px">3</div>
<div class="a c" style="left:273.8px;width:66.3px;top:266.5px">4</div>
<div class="a c" style="left:342.5px;width:66.15px;top:266.5px">19.00</div>
<div class="a c" style="left:411.05px;width:66.15px;top:266.5px">24.40</div>
<div class="a c" style="left:479.6px;width:66.4px;top:266.5px">1.36</div>
<div class="a c" style="left:548.4px;width:66px;top:266.5px">3.28</div>
<div class="a c" style="left:616.8px;width:66.2px;top:266.5px">1</div>
<div class="a c" style="left:685.4px;width:88.8px;top:266.5px">.74806</div>
<div class="a c" style="left:776.6px;width:88.9px;top:266.5px">.61944</div>
<div class="a c" style="left:867.9px;width:88.9px;top:266.5px">.66390</div>
<div class="a rh" style="top:282.02px"><div class="rt">10</div></div>
<div class="a c" style="left:68.8px;width:65px;top:284.93px">36</div>
<div class="a c" style="left:136.2px;width:66.7px;top:284.93px">1</div>
<div class="a c" style="left:205.3px;width:66.1px;top:284.93px">0</div>
<div class="a c" style="left:273.8px;width:66.3px;top:284.93px">13</div>
<div class="a c" style="left:342.5px;width:66.15px;top:284.93px">25.00</div>
<div class="a c" style="left:411.05px;width:66.15px;top:284.93px">19.70</div>
<div class="a c" style="left:479.6px;width:66.4px;top:284.93px">2.78</div>
<div class="a c" style="left:548.4px;width:66px;top:284.93px">2.15</div>
<div class="a c" style="left:616.8px;width:66.2px;top:284.93px">0</div>
<div class="a c" style="left:685.4px;width:88.8px;top:284.93px">.81506</div>
<div class="a c" style="left:776.6px;width:88.9px;top:284.93px">.79723</div>
<div class="a c" style="left:867.9px;width:88.9px;top:284.93px">.51553</div>
<div class="a rh" style="top:300.45px"><div class="rt">11</div></div>
<div class="a c" style="left:68.8px;width:65px;top:303.35px">27</div>
<div class="a c" style="left:136.2px;width:66.7px;top:303.35px">1</div>
<div class="a c" style="left:205.3px;width:66.1px;top:303.35px">0</div>
<div class="a c" style="left:273.8px;width:66.3px;top:303.35px">1</div>
<div class="a c" style="left:342.5px;width:66.15px;top:303.35px">16.00</div>
<div class="a c" style="left:411.05px;width:66.15px;top:303.35px">1.70</div>
<div class="a c" style="left:479.6px;width:66.4px;top:303.35px">.18</div>
<div class="a c" style="left:548.4px;width:66px;top:303.35px">.09</div>
<div class="a c" style="left:616.8px;width:66.2px;top:303.35px">0</div>
<div class="a c" style="left:685.4px;width:88.8px;top:303.35px">.35031</div>
<div class="a c" style="left:776.6px;width:88.9px;top:303.35px">.61051</div>
<div class="a c" style="left:867.9px;width:88.9px;top:303.35px">.90934</div>
<div class="a rh" style="top:318.88px"><div class="rt">12</div></div>
<div class="a c" style="left:68.8px;width:65px;top:321.78px">25</div>
<div class="a c" style="left:136.2px;width:66.7px;top:321.78px">1</div>
<div class="a c" style="left:205.3px;width:66.1px;top:321.78px">4</div>
<div class="a c" style="left:273.8px;width:66.3px;top:321.78px">0</div>
<div class="a c" style="left:342.5px;width:66.15px;top:321.78px">23.00</div>
<div class="a c" style="left:411.05px;width:66.15px;top:321.78px">5.20</div>
<div class="a c" style="left:479.6px;width:66.4px;top:321.78px">.25</div>
<div class="a c" style="left:548.4px;width:66px;top:321.78px">.94</div>
<div class="a c" style="left:616.8px;width:66.2px;top:321.78px">0</div>
<div class="a c" style="left:685.4px;width:88.8px;top:321.78px">.23905</div>
<div class="a c" style="left:776.6px;width:88.9px;top:321.78px">.21905</div>
<div class="a c" style="left:867.9px;width:88.9px;top:321.78px">.13651</div>
<div class="a rh" style="top:337.3px"><div class="rt">13</div></div>
<div class="a c" style="left:68.8px;width:65px;top:340.2px">52</div>
<div class="a c" style="left:136.2px;width:66.7px;top:340.2px">1</div>
<div class="a c" style="left:205.3px;width:66.1px;top:340.2px">24</div>
<div class="a c" style="left:273.8px;width:66.3px;top:340.2px">14</div>
<div class="a c" style="left:342.5px;width:66.15px;top:340.2px">64.00</div>
<div class="a c" style="left:411.05px;width:66.15px;top:340.2px">10.00</div>
<div class="a c" style="left:479.6px;width:66.4px;top:340.2px">3.93</div>
<div class="a c" style="left:548.4px;width:66px;top:340.2px">2.47</div>
<div class="a c" style="left:616.8px;width:66.2px;top:340.2px">0</div>
<div class="a c" style="left:685.4px;width:88.8px;top:340.2px">.00979</div>
<div class="a c" style="left:776.6px;width:88.9px;top:340.2px">.00628</div>
<div class="a c" style="left:867.9px;width:88.9px;top:340.2px">.22890</div>
<div class="a rh" style="top:355.72px"><div class="rt">14</div></div>
<div class="a c" style="left:68.8px;width:65px;top:358.62px">37</div>
<div class="a c" style="left:136.2px;width:66.7px;top:358.62px">1</div>
<div class="a c" style="left:205.3px;width:66.1px;top:358.62px">6</div>
<div class="a c" style="left:273.8px;width:66.3px;top:358.62px">9</div>
<div class="a c" style="left:342.5px;width:66.15px;top:358.62px">29.00</div>
<div class="a c" style="left:411.05px;width:66.15px;top:358.62px">16.30</div>
<div class="a c" style="left:479.6px;width:66.4px;top:358.62px">1.72</div>
<div class="a c" style="left:548.4px;width:66px;top:358.62px">3.01</div>
<div class="a c" style="left:616.8px;width:66.2px;top:358.62px">0</div>
<div class="a c" style="left:685.4px;width:88.8px;top:358.62px">.36449</div>
<div class="a c" style="left:776.6px;width:88.9px;top:358.62px">.34047</div>
<div class="a c" style="left:867.9px;width:88.9px;top:358.62px">.40484</div>
<div class="a rh" style="top:374.15px"><div class="rt">15</div></div>
<div class="a c" style="left:68.8px;width:65px;top:377.05px">48</div>
<div class="a c" style="left:136.2px;width:66.7px;top:377.05px">1</div>
<div class="a c" style="left:205.3px;width:66.1px;top:377.05px">22</div>
<div class="a c" style="left:273.8px;width:66.3px;top:377.05px">15</div>
<div class="a c" style="left:342.5px;width:66.15px;top:377.05px">100.00</div>
<div class="a c" style="left:411.05px;width:66.15px;top:377.05px">9.10</div>
<div class="a c" style="left:479.6px;width:66.4px;top:377.05px">3.70</div>
<div class="a c" style="left:548.4px;width:66px;top:377.05px">5.40</div>
<div class="a c" style="left:616.8px;width:66.2px;top:377.05px">0</div>
<div class="a c" style="left:685.4px;width:88.8px;top:377.05px">.01187</div>
<div class="a c" style="left:776.6px;width:88.9px;top:377.05px">.00741</div>
<div class="a c" style="left:867.9px;width:88.9px;top:377.05px">.20864</div>
<div class="a rh" style="top:392.57px"><div class="rt">16</div></div>
<div class="a c" style="left:68.8px;width:65px;top:395.48px">36</div>
<div class="a c" style="left:136.2px;width:66.7px;top:395.48px">2</div>
<div class="a c" style="left:205.3px;width:66.1px;top:395.48px">9</div>
<div class="a c" style="left:273.8px;width:66.3px;top:395.48px">6</div>
<div class="a c" style="left:342.5px;width:66.15px;top:395.48px">49.00</div>
<div class="a c" style="left:411.05px;width:66.15px;top:395.48px">8.60</div>
<div class="a c" style="left:479.6px;width:66.4px;top:395.48px">.82</div>
<div class="a c" style="left:548.4px;width:66px;top:395.48px">3.40</div>
<div class="a c" style="left:616.8px;width:66.2px;top:395.48px">1</div>
<div class="a c" style="left:685.4px;width:88.8px;top:395.48px">.09670</div>
<div class="a c" style="left:776.6px;width:88.9px;top:395.48px">.11384</div>
<div class="a c" style="left:867.9px;width:88.9px;top:395.48px">.19801</div>
<div class="a rh" style="top:411px"><div class="rt">17</div></div>
<div class="a c" style="left:68.8px;width:65px;top:413.9px">36</div>
<div class="a c" style="left:136.2px;width:66.7px;top:413.9px">2</div>
<div class="a c" style="left:205.3px;width:66.1px;top:413.9px">13</div>
<div class="a c" style="left:273.8px;width:66.3px;top:413.9px">6</div>
<div class="a c" style="left:342.5px;width:66.15px;top:413.9px">41.00</div>
<div class="a c" style="left:411.05px;width:66.15px;top:413.9px">16.40</div>
<div class="a c" style="left:479.6px;width:66.4px;top:413.9px">2.92</div>
<div class="a c" style="left:548.4px;width:66px;top:413.9px">3.81</div>
<div class="a c" style="left:616.8px;width:66.2px;top:413.9px">1</div>
<div class="a c" style="left:685.4px;width:88.8px;top:413.9px">.21205</div>
<div class="a c" style="left:776.6px;width:88.9px;top:413.9px">.17502</div>
<div class="a c" style="left:867.9px;width:88.9px;top:413.9px">.40810</div>
<div class="a rh" style="top:429.43px"><div class="rt">18</div></div>
<div class="a c" style="left:68.8px;width:65px;top:432.33px">43</div>
<div class="a c" style="left:136.2px;width:66.7px;top:432.33px">1</div>
<div class="a c" style="left:205.3px;width:66.1px;top:432.33px">23</div>
<div class="a c" style="left:273.8px;width:66.3px;top:432.33px">19</div>
<div class="a c" style="left:342.5px;width:66.15px;top:432.33px">72.00</div>
<div class="a c" style="left:411.05px;width:66.15px;top:432.33px">7.60</div>
<div class="a c" style="left:479.6px;width:66.4px;top:432.33px">1.18</div>
<div class="a c" style="left:548.4px;width:66px;top:432.33px">4.29</div>
<div class="a c" style="left:616.8px;width:66.2px;top:432.33px">0</div>
<div class="a c" style="left:685.4px;width:88.8px;top:432.33px">.00140</div>
<div class="a c" style="left:776.6px;width:88.9px;top:432.33px">.00056</div>
<div class="a c" style="left:867.9px;width:88.9px;top:432.33px">.17783</div>
<div class="a rh" style="top:447.85px"><div class="rt">19</div></div>
<div class="a c" style="left:68.8px;width:65px;top:450.75px">39</div>
<div class="a c" style="left:136.2px;width:66.7px;top:450.75px">1</div>
<div class="a c" style="left:205.3px;width:66.1px;top:450.75px">6</div>
<div class="a c" style="left:273.8px;width:66.3px;top:450.75px">9</div>
<div class="a c" style="left:342.5px;width:66.15px;top:450.75px">61.00</div>
<div class="a c" style="left:411.05px;width:66.15px;top:450.75px">5.70</div>
<div class="a c" style="left:479.6px;width:66.4px;top:450.75px">.56</div>
<div class="a c" style="left:548.4px;width:66px;top:450.75px">2.91</div>
<div class="a c" style="left:616.8px;width:66.2px;top:450.75px">0</div>
<div class="a c" style="left:685.4px;width:88.8px;top:450.75px">.10415</div>
<div class="a c" style="left:776.6px;width:88.9px;top:450.75px">.09257</div>
<div class="a c" style="left:867.9px;width:88.9px;top:450.75px">.14432</div>
<div class="a rh" style="top:466.27px"><div class="rt">20</div></div>
<div class="a c" style="left:68.8px;width:65px;top:469.18px">41</div>
<div class="a c" style="left:136.2px;width:66.7px;top:469.18px">3</div>
<div class="a c" style="left:205.3px;width:66.1px;top:469.18px">0</div>
<div class="a c" style="left:273.8px;width:66.3px;top:469.18px">21</div>
<div class="a c" style="left:342.5px;width:66.15px;top:469.18px">26.00</div>
<div class="a c" style="left:411.05px;width:66.15px;top:469.18px">1.70</div>
<div class="a c" style="left:479.6px;width:66.4px;top:469.18px">.10</div>
<div class="a c" style="left:548.4px;width:66px;top:469.18px">.34</div>
<div class="a c" style="left:616.8px;width:66.2px;top:469.18px">0</div>
<div class="a c" style="left:685.4px;width:88.8px;top:469.18px">.09912</div>
<div class="a c" style="left:776.6px;width:88.9px;top:469.18px">.08693</div>
<div class="a c" style="left:867.9px;width:88.9px;top:469.18px">.90350</div>
<div class="a rh" style="top:484.7px"><div class="rt">21</div></div>
<div class="a c" style="left:68.8px;width:65px;top:487.6px">39</div>
<div class="a c" style="left:136.2px;width:66.7px;top:487.6px">1</div>
<div class="a c" style="left:205.3px;width:66.1px;top:487.6px">22</div>
<div class="a c" style="left:273.8px;width:66.3px;top:487.6px">3</div>
<div class="a c" style="left:342.5px;width:66.15px;top:487.6px">52.00</div>
<div class="a c" style="left:411.05px;width:66.15px;top:487.6px">3.20</div>
<div class="a c" style="left:479.6px;width:66.4px;top:487.6px">1.15</div>
<div class="a c" style="left:548.4px;width:66px;top:487.6px">.51</div>
<div class="a c" style="left:616.8px;width:66.2px;top:487.6px">0</div>
<div class="a c" style="left:685.4px;width:88.8px;top:487.6px">.00437</div>
<div class="a c" style="left:776.6px;width:88.9px;top:487.6px">.00164</div>
<div class="a c" style="left:867.9px;width:88.9px;top:487.6px">.10875</div>
<div class="a rh" style="top:503.12px"><div class="rt">22</div></div>
<div class="a c" style="left:68.8px;width:65px;top:506.03px">47</div>
<div class="a c" style="left:136.2px;width:66.7px;top:506.03px">1</div>
<div class="a c" style="left:205.3px;width:66.1px;top:506.03px">17</div>
<div class="a c" style="left:273.8px;width:66.3px;top:506.03px">21</div>
<div class="a c" style="left:342.5px;width:66.15px;top:506.03px">43.00</div>
<div class="a c" style="left:411.05px;width:66.15px;top:506.03px">5.60</div>
<div class="a c" style="left:479.6px;width:66.4px;top:506.03px">.59</div>
<div class="a c" style="left:548.4px;width:66px;top:506.03px">1.82</div>
<div class="a c" style="left:616.8px;width:66.2px;top:506.03px">0</div>
<div class="a c" style="left:685.4px;width:88.8px;top:506.03px">.00305</div>
<div class="a c" style="left:776.6px;width:88.9px;top:506.03px">.00201</div>
<div class="a c" style="left:867.9px;width:88.9px;top:506.03px">.14262</div>
<div class="a rh" style="top:521.55px"><div class="rt">23</div></div>
<div class="a c" style="left:68.8px;width:65px;top:524.45px">28</div>
<div class="a c" style="left:136.2px;width:66.7px;top:524.45px">1</div>
<div class="a c" style="left:205.3px;width:66.1px;top:524.45px">3</div>
<div class="a c" style="left:273.8px;width:66.3px;top:524.45px">6</div>
<div class="a c" style="left:342.5px;width:66.15px;top:524.45px">26.00</div>
<div class="a c" style="left:411.05px;width:66.15px;top:524.45px">10.00</div>
<div class="a c" style="left:479.6px;width:66.4px;top:524.45px">.43</div>
<div class="a c" style="left:548.4px;width:66px;top:524.45px">2.17</div>
<div class="a c" style="left:616.8px;width:66.2px;top:524.45px">0</div>
<div class="a c" style="left:685.4px;width:88.8px;top:524.45px">.29353</div>
<div class="a c" style="left:776.6px;width:88.9px;top:524.45px">.23604</div>
<div class="a c" style="left:867.9px;width:88.9px;top:524.45px">.22890</div>
<div class="a rh" style="top:539.98px"><div class="rt">24</div></div>
<div class="a c" style="left:68.8px;width:65px;top:542.88px">29</div>
<div class="a c" style="left:136.2px;width:66.7px;top:542.88px">1</div>
<div class="a c" style="left:205.3px;width:66.1px;top:542.88px">8</div>
<div class="a c" style="left:273.8px;width:66.3px;top:542.88px">6</div>
<div class="a c" style="left:342.5px;width:66.15px;top:542.88px">27.00</div>
<div class="a c" style="left:411.05px;width:66.15px;top:542.88px">9.00</div>
<div class="a c" style="left:479.6px;width:66.4px;top:542.88px">.40</div>
<div class="a c" style="left:548.4px;width:66px;top:542.88px">2.24</div>
<div class="a c" style="left:616.8px;width:66.2px;top:542.88px">0</div>
<div class="a c" style="left:685.4px;width:88.8px;top:542.88px">.10699</div>
<div class="a c" style="left:776.6px;width:88.9px;top:542.88px">.20413</div>
<div class="a c" style="left:867.9px;width:88.9px;top:542.88px">.45989</div>
<div class="a rh" style="top:558.4px"><div class="rt">25</div></div>
<div class="a c" style="left:68.8px;width:65px;top:561.3px">21</div>
<div class="a c" style="left:136.2px;width:66.7px;top:561.3px">2</div>
<div class="a c" style="left:205.3px;width:66.1px;top:561.3px">1</div>
<div class="a c" style="left:273.8px;width:66.3px;top:561.3px">2</div>
<div class="a c" style="left:342.5px;width:66.15px;top:561.3px">16.00</div>
<div class="a c" style="left:411.05px;width:66.15px;top:561.3px">18.00</div>
<div class="a c" style="left:479.6px;width:66.4px;top:561.3px">.24</div>
<div class="a c" style="left:548.4px;width:66px;top:561.3px">2.64</div>
<div class="a c" style="left:616.8px;width:66.2px;top:561.3px">1</div>
<div class="a c" style="left:685.4px;width:88.8px;top:561.3px">.62978</div>
<div class="a c" style="left:776.6px;width:88.9px;top:561.3px">.62403</div>
<div class="a c" style="left:867.9px;width:88.9px;top:561.3px">.16100</div>
<div class="a rh" style="top:576.82px"><div class="rt">26</div></div>
<div class="a c" style="left:68.8px;width:65px;top:579.72px">25</div>
<div class="a c" style="left:136.2px;width:66.7px;top:579.72px">4</div>
<div class="a c" style="left:205.3px;width:66.1px;top:579.72px">0</div>
<div class="a c" style="left:273.8px;width:66.3px;top:579.72px">2</div>
<div class="a c" style="left:342.5px;width:66.15px;top:579.72px">32.00</div>
<div class="a c" style="left:411.05px;width:66.15px;top:579.72px">17.00</div>
<div class="a c" style="left:479.6px;width:66.4px;top:579.72px">2.14</div>
<div class="a c" style="left:548.4px;width:66px;top:579.72px">3.69</div>
<div class="a c" style="left:616.8px;width:66.2px;top:579.72px">0</div>
<div class="a c" style="left:685.4px;width:88.8px;top:579.72px">.86131</div>
<div class="a c" style="left:776.6px;width:88.9px;top:579.72px">.77342</div>
<div class="a c" style="left:867.9px;width:88.9px;top:579.72px">.41758</div>
<div class="a rh" style="top:595.25px"><div class="rt">27</div></div>
<div class="a c" style="left:68.8px;width:65px;top:598.15px">45</div>
<div class="a c" style="left:136.2px;width:66.7px;top:598.15px">2</div>
<div class="a c" style="left:205.3px;width:66.1px;top:598.15px">9</div>
<div class="a c" style="left:273.8px;width:66.3px;top:598.15px">26</div>
<div class="a c" style="left:342.5px;width:66.15px;top:598.15px">69.00</div>
<div class="a c" style="left:411.05px;width:66.15px;top:598.15px">6.70</div>
<div class="a c" style="left:479.6px;width:66.4px;top:598.15px">.71</div>
<div class="a c" style="left:548.4px;width:66px;top:598.15px">3.49</div>
<div class="a c" style="left:616.8px;width:66.2px;top:598.15px">0</div>
<div class="a c" style="left:685.4px;width:88.8px;top:598.15px">.01646</div>
<div class="a c" style="left:776.6px;width:88.9px;top:598.15px">.01593</div>
<div class="a c" style="left:867.9px;width:88.9px;top:598.15px">.47297</div>
<div class="a rh" style="top:613.67px"><div class="rt">28</div></div>
<div class="a c" style="left:68.8px;width:65px;top:616.57px">43</div>
<div class="a c" style="left:136.2px;width:66.7px;top:616.57px">1</div>
<div class="a c" style="left:205.3px;width:66.1px;top:616.57px">25</div>
<div class="a c" style="left:273.8px;width:66.3px;top:616.57px">21</div>
<div class="a c" style="left:342.5px;width:66.15px;top:616.57px">64.00</div>
<div class="a c" style="left:411.05px;width:66.15px;top:616.57px">16.70</div>
<div class="a c" style="left:479.6px;width:66.4px;top:616.57px">.95</div>
<div class="a c" style="left:548.4px;width:66px;top:616.57px">3.92</div>
<div class="a c" style="left:616.8px;width:66.2px;top:616.57px">0</div>
<div class="a c" style="left:685.4px;width:88.8px;top:616.57px">.00144</div>
<div class="a c" style="left:776.6px;width:88.9px;top:616.57px">.00064</div>
<div class="a c" style="left:867.9px;width:88.9px;top:616.57px">.34035</div>
<div id="below" class="a"></div>
<div id="sb" class="a"></div><div id="sbl" class="a"></div>
<svg class="a" style="left:71.5px;top:624px" width="6" height="8"><path d="M5 0.5V7.5L1 4Z" fill="#606870"/></svg>
<div id="bot1" class="a"></div><div id="bot2" class="a"></div><div class="a" style="left:0;top:634.2px;width:68.5px;height:1.4px;background:#4a88cc"></div>
<div class="a" style="left:637.5px;top:637.3px;width:2px;height:2px;border-radius:1px;background:#34508a"></div>
<div class="a" style="left:641.8px;top:637.3px;width:2px;height:2px;border-radius:1px;background:#34508a"></div>
<div class="a" style="left:646.1px;top:637.3px;width:2px;height:2px;border-radius:1px;background:#34508a"></div>
</body></html>
